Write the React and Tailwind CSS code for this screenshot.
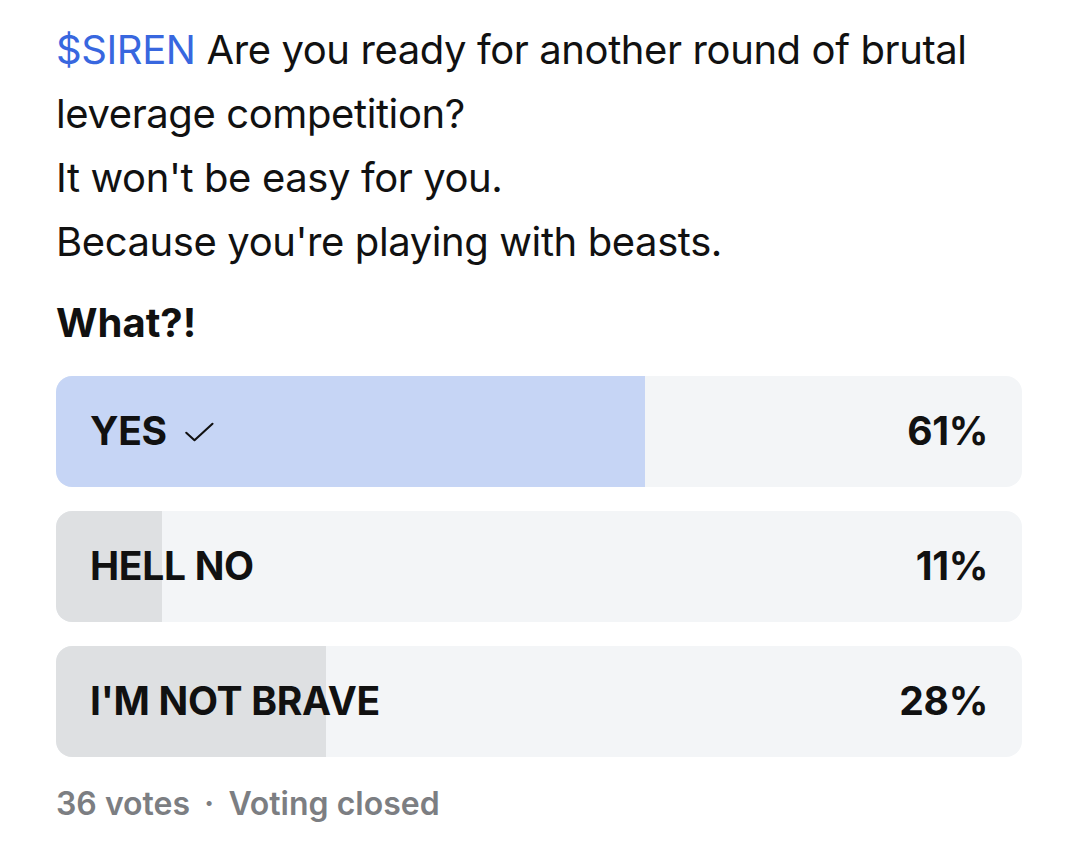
import React from "react";

const options = [
  { id: 1, label: "YES", pct: 61, picked: true },
  { id: 2, label: "HELL NO", pct: 11 },
  { id: 3, label: "I'M NOT BRAVE", pct: 28 },
];

const Check = () => (
  <svg width="36" height="36" viewBox="0 0 24 24" fill="none" stroke="#111" strokeWidth="1.4" strokeLinecap="round" strokeLinejoin="round">
    <path d="M3.5 12.5l5.5 5L21 6.5" />
  </svg>
);

export default function App() {
  return (
    <div className="w-[1079px] h-[847px] bg-white font-['Inter',sans-serif] text-[#111]">
      <div className="pl-[56px] pr-[57px] pt-[18px]">
        {/* Post text */}
        <div className="text-[40px] leading-[64px] tracking-[-0.4px]">
          <p>
            <span className="text-[#3867df]">$SIREN</span> Are you ready for another round of brutal leverage competition?
          </p>
          <p>It won't be easy for you.</p>
          <p>Because you're playing with beasts.</p>
        </div>

        <h3 className="mt-[22px] text-[40px] leading-[54px] font-bold">What?!</h3>

        {/* Poll */}
        <div className="mt-[26px] flex flex-col gap-[24px]">
          {options.map((o) => (
            <div key={o.id} className="relative h-[111px] rounded-[16px] bg-[#f3f5f7] overflow-hidden">
              <div
                className={o.picked ? "absolute inset-y-0 left-0 bg-[#c6d5f5]" : "absolute inset-y-0 left-0 bg-[#dee0e2]"}
                style={{ width: `${o.pct}%` }}
              />
              <div className="relative h-full flex items-center justify-between px-[34px] text-[39px] font-bold tracking-[-0.3px]">
                <span className="flex items-center gap-[14px]">
                  {o.label}
                  {o.picked && <Check />}
                </span>
                <span>{o.pct}%</span>
              </div>
            </div>
          ))}
        </div>

        <div className="mt-[24px] text-[32px] leading-[46px] font-semibold text-[#7c7e82]">
          36 votes <span className="mx-[6px]">·</span> Voting closed
        </div>
      </div>
    </div>
  );
}
